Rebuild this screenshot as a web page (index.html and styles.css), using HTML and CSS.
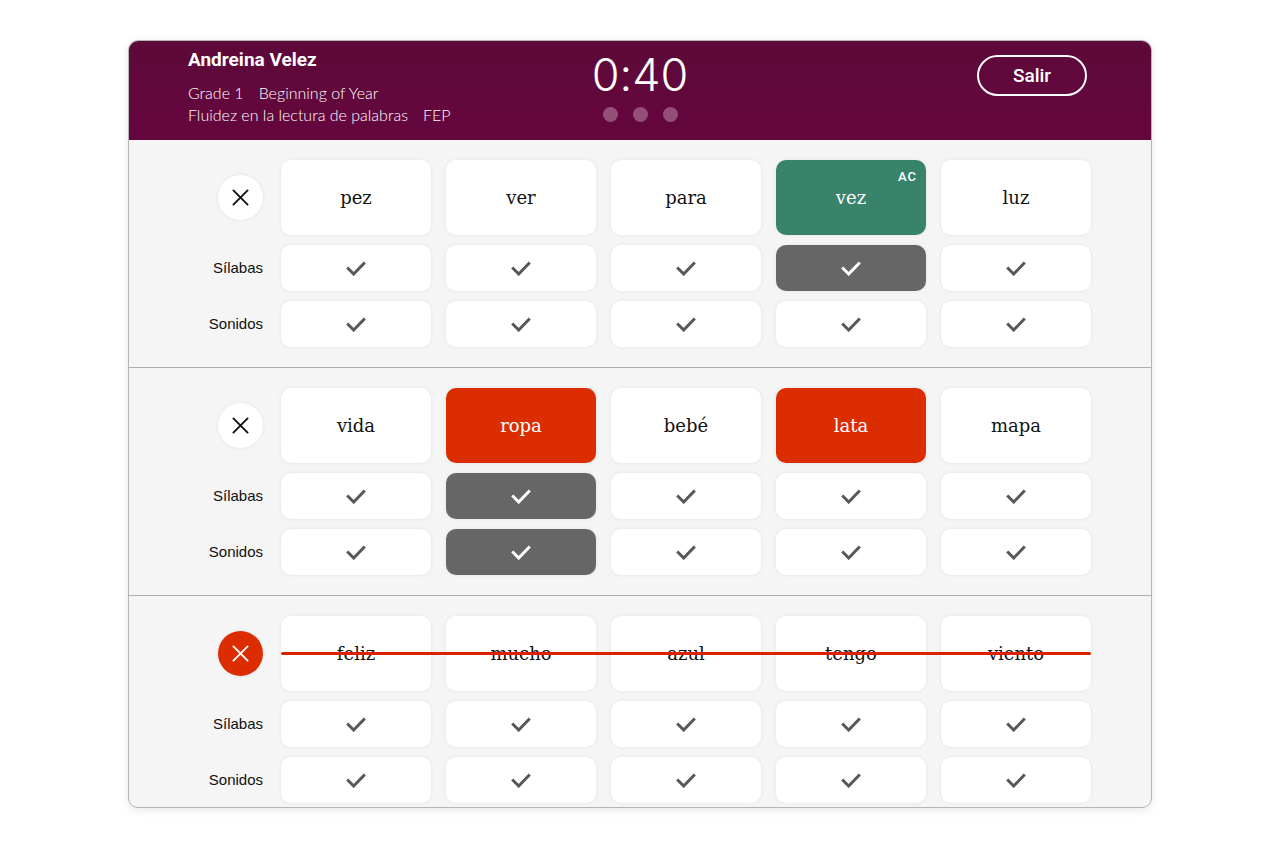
FILE: index.html
```html
<!DOCTYPE html>
<html lang="es">
<head>
    <meta charset="UTF-8">
    <meta name="viewport" content="width=device-width, initial-scale=1.0">
    <title>Fluidez en la lectura de palabras</title>
    <link rel="stylesheet" href="styles.css">
</head>
<body>

    <svg class="icon-defs" aria-hidden="true">
        <symbol id="check" viewBox="0 0 20 15">
            <path d="M1.2 6.5 L7.7 13 L18.8 1.5" fill="none" stroke="currentColor" stroke-width="3"/>
        </symbol>
        <symbol id="cross" viewBox="0 0 18 18">
            <path d="M1.5 1.5 L16.5 16.5 M16.5 1.5 L1.5 16.5" fill="none" stroke="currentColor" stroke-width="2" stroke-linecap="round"/>
        </symbol>
    </svg>

    <main class="card">
        <header class="header">
            <div class="student">
                <h1>Andreina Velez</h1>
                <p><span>Grade 1</span><span>Beginning of Year</span></p>
                <p><span>Fluidez en la lectura de palabras</span><span>FEP</span></p>
            </div>
            <div class="timer">
                <div class="time">0:40</div>
                <div class="dots"><i></i><i></i><i></i></div>
            </div>
            <button class="exit">Salir</button>
        </header>

        <section class="block">
            <div class="row words">
                <div class="label"><button class="skip" aria-label="X"><svg><use href="#cross"/></svg></button></div>
                <button class="cell">pez</button>
                <button class="cell">ver</button>
                <button class="cell">para</button>
                <button class="cell correct">vez<span class="badge">AC</span></button>
                <button class="cell">luz</button>
            </div>
            <div class="row">
                <div class="label" id="silabas-1">Sílabas</div>
                <button class="cell" aria-labelledby="silabas-1"><svg><use href="#check"/></svg></button>
                <button class="cell" aria-labelledby="silabas-1"><svg><use href="#check"/></svg></button>
                <button class="cell" aria-labelledby="silabas-1"><svg><use href="#check"/></svg></button>
                <button class="cell marked" aria-labelledby="silabas-1"><svg><use href="#check"/></svg></button>
                <button class="cell" aria-labelledby="silabas-1"><svg><use href="#check"/></svg></button>
            </div>
            <div class="row">
                <div class="label" id="sonidos-1">Sonidos</div>
                <button class="cell" aria-labelledby="sonidos-1"><svg><use href="#check"/></svg></button>
                <button class="cell" aria-labelledby="sonidos-1"><svg><use href="#check"/></svg></button>
                <button class="cell" aria-labelledby="sonidos-1"><svg><use href="#check"/></svg></button>
                <button class="cell" aria-labelledby="sonidos-1"><svg><use href="#check"/></svg></button>
                <button class="cell" aria-labelledby="sonidos-1"><svg><use href="#check"/></svg></button>
            </div>
        </section>

        <section class="block">
            <div class="row words">
                <div class="label"><button class="skip" aria-label="X"><svg><use href="#cross"/></svg></button></div>
                <button class="cell">vida</button>
                <button class="cell wrong">ropa</button>
                <button class="cell">bebé</button>
                <button class="cell wrong">lata</button>
                <button class="cell">mapa</button>
            </div>
            <div class="row">
                <div class="label" id="silabas-2">Sílabas</div>
                <button class="cell" aria-labelledby="silabas-2"><svg><use href="#check"/></svg></button>
                <button class="cell marked" aria-labelledby="silabas-2"><svg><use href="#check"/></svg></button>
                <button class="cell" aria-labelledby="silabas-2"><svg><use href="#check"/></svg></button>
                <button class="cell" aria-labelledby="silabas-2"><svg><use href="#check"/></svg></button>
                <button class="cell" aria-labelledby="silabas-2"><svg><use href="#check"/></svg></button>
            </div>
            <div class="row">
                <div class="label" id="sonidos-2">Sonidos</div>
                <button class="cell" aria-labelledby="sonidos-2"><svg><use href="#check"/></svg></button>
                <button class="cell marked" aria-labelledby="sonidos-2"><svg><use href="#check"/></svg></button>
                <button class="cell" aria-labelledby="sonidos-2"><svg><use href="#check"/></svg></button>
                <button class="cell" aria-labelledby="sonidos-2"><svg><use href="#check"/></svg></button>
                <button class="cell" aria-labelledby="sonidos-2"><svg><use href="#check"/></svg></button>
            </div>
        </section>

        <section class="block">
            <div class="row words crossed">
                <div class="label"><button class="skip active" aria-label="X"><svg><use href="#cross"/></svg></button></div>
                <button class="cell">feliz</button>
                <button class="cell">mucho</button>
                <button class="cell">azul</button>
                <button class="cell">tengo</button>
                <button class="cell">viento</button>
            </div>
            <div class="row">
                <div class="label" id="silabas-3">Sílabas</div>
                <button class="cell" aria-labelledby="silabas-3"><svg><use href="#check"/></svg></button>
                <button class="cell" aria-labelledby="silabas-3"><svg><use href="#check"/></svg></button>
                <button class="cell" aria-labelledby="silabas-3"><svg><use href="#check"/></svg></button>
                <button class="cell" aria-labelledby="silabas-3"><svg><use href="#check"/></svg></button>
                <button class="cell" aria-labelledby="silabas-3"><svg><use href="#check"/></svg></button>
            </div>
            <div class="row">
                <div class="label" id="sonidos-3">Sonidos</div>
                <button class="cell" aria-labelledby="sonidos-3"><svg><use href="#check"/></svg></button>
                <button class="cell" aria-labelledby="sonidos-3"><svg><use href="#check"/></svg></button>
                <button class="cell" aria-labelledby="sonidos-3"><svg><use href="#check"/></svg></button>
                <button class="cell" aria-labelledby="sonidos-3"><svg><use href="#check"/></svg></button>
                <button class="cell" aria-labelledby="sonidos-3"><svg><use href="#check"/></svg></button>
            </div>
        </section>
    </main>

</body>
</html>
```
FILE: styles.css
```css
* {
    box-sizing: border-box;
}

body {
    margin: 0;
    padding: 40px;
    background-color: #fff;
    color: #111;
    font-family: "Liberation Sans", Arial, sans-serif;
}

button {
    border: 0;
    padding: 0;
    font: inherit;
    color: inherit;
    cursor: pointer;
}

.icon-defs {
    display: none;
}

.card {
    max-width: 1024px;
    margin: 0 auto;
    border: 1px solid #b4b7b6;
    border-radius: 10px;
    background-color: #f5f5f5;
    box-shadow: 0 2px 10px rgba(0, 0, 0, 0.1);
    overflow: hidden;
}

/* header */
.header {
    display: grid;
    grid-template-columns: 1fr auto 1fr;
    align-items: start;
    padding: 8px 59px 14px;
    background: linear-gradient(#5d0939, #66063f);
    color: #fff;
    font-family: Roboto, sans-serif;
}

.student h1 {
    margin: 0 0 11px;
    font-size: 19px;
    line-height: 22px;
    font-weight: 700;
}

.student p {
    display: flex;
    gap: 15px;
    margin: 0;
    font-family: Lato, sans-serif;
    font-size: 16px;
    line-height: 22px;
    font-weight: 300;
}

.timer {
    text-align: center;
}

.time {
    font-family: Inter, sans-serif;
    font-size: 45px;
    line-height: 52px;
    font-weight: 300;
    font-feature-settings: "calt" 0;
}

.dots {
    display: flex;
    justify-content: center;
    gap: 15px;
    margin-top: 6px;
}

.dots i {
    width: 15px;
    height: 15px;
    border-radius: 50%;
    background-color: #934f77;
}

.exit {
    justify-self: end;
    width: 110px;
    height: 41px;
    margin: 6px 5px 0 0;
    border: 2px solid #fff;
    border-radius: 21px;
    background: none;
    font-size: 19px;
    line-height: 36px;
    font-weight: 500;
}

/* word blocks */
.block {
    display: grid;
    gap: 10px;
    padding: 20px 60px 20px 59px;
    border-bottom: 1px solid #b0b0b0;
}

.block:last-child {
    padding-bottom: 4px;
    border-bottom: 0;
}

.row {
    position: relative;
    display: grid;
    grid-template-columns: 78px repeat(5, 1fr);
    gap: 15px;
    align-items: center;
}

.label {
    padding-right: 3px;
    text-align: right;
    font-size: 15px;
    line-height: 20px;
}

.cell {
    position: relative;
    display: flex;
    align-items: center;
    justify-content: center;
    height: 46px;
    border-radius: 10px;
    background-color: #fff;
    color: #585858;
    box-shadow: 0 0 4px rgba(0, 0, 0, 0.07);
}

.cell svg {
    width: 20px;
    height: 15px;
}

.words .cell {
    height: 75px;
    color: #111;
    font-family: "DejaVu Serif", serif;
    font-size: 18px;
}

.cell.marked {
    background-color: #666;
    color: #fff;
}

.words .correct {
    background-color: #38836a;
    color: #fff;
}

.words .wrong {
    background-color: #dc2d00;
    color: #fff;
}

.badge {
    position: absolute;
    top: 9px;
    right: 9px;
    font-family: Roboto, sans-serif;
    font-size: 13px;
    line-height: 16px;
    font-weight: 500;
    letter-spacing: 1px;
}

.skip {
    display: inline-flex;
    align-items: center;
    justify-content: center;
    width: 45px;
    height: 45px;
    border-radius: 50%;
    background-color: #fff;
    box-shadow: 0 0 4px rgba(0, 0, 0, 0.07);
    vertical-align: top;
}

.skip svg {
    width: 17px;
    height: 17px;
}

.skip.active {
    background-color: #dc2d00;
    color: #fff;
}

/* red line through a skipped row */
.crossed::after {
    content: "";
    position: absolute;
    top: 36px;
    left: 93px;
    right: 0;
    height: 3px;
    border-radius: 2px;
    background-color: #dc2000;
}
```
